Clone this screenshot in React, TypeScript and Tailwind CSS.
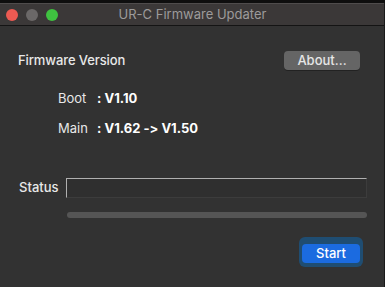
import React from "react";

const App = () => {
  return (
    <div className="w-[385px] h-[287px] bg-[#0e0e0e] overflow-hidden font-['Inter',sans-serif] [font-feature-settings:'calt'_0,'liga'_0]">
      <div className="h-[3px]" />
      <div className="h-[284px] bg-[#323232] flex flex-col border-r border-[#1a1a1a]">
        {/* title bar */}
        <div className="relative h-[23px] bg-[#3b3838] border-t border-[#4f4c4c] border-b border-b-[#141414] flex items-center">
          <div className="flex items-center gap-[8px] pl-[6px]">
            <span className="w-[12px] h-[12px] rounded-full bg-[#ed5a52]" />
            <span className="w-[12px] h-[12px] rounded-full bg-[#6b6868]" />
            <span className="w-[12px] h-[12px] rounded-full bg-[#3fc240]" />
          </div>
          <div className="absolute inset-0 flex items-center justify-center text-[13px] text-[#9d9b9b] pl-[1px]">
            UR-C Firmware Updater
          </div>
        </div>

        {/* body */}
        <div className="flex flex-col pt-[25px]">
          <div className="flex items-center justify-between pl-[18px] pr-[24px] h-[19px]">
            <span className="text-[13px] font-medium text-[#e8e8e8] tracking-[-0.1px]">Firmware Version</span>
            <button className="w-[76px] h-[19px] rounded-[4px] bg-[#656565] text-[13px] font-medium text-[#e6e6e6] leading-none shadow-[0_1px_0_rgba(0,0,0,0.3)]">
              About...
            </button>
          </div>

          <div className="flex flex-col gap-[14px] pl-[58px] mt-[20px] text-[13px] leading-[16px] text-[#e8e8e8]">
            <div className="flex">
              <span className="w-[39px]">Boot</span>
              <span className="font-bold text-white">: V1.10</span>
            </div>
            <div className="flex">
              <span className="w-[39px]">Main</span>
              <span className="font-bold text-white">: V1.62 -&gt; V1.50</span>
            </div>
          </div>

          <div className="flex items-center mt-[42px] pl-[19px]">
            <span className="w-[47px] text-[13px] font-medium text-[#e8e8e8]">Status</span>
            <div className="w-[301px] h-[20px] bg-[#2f2f2f] border border-[#3c3c3c] border-t-[#b0b0b0] border-l-[#b0b0b0]" />
          </div>

          <div className="ml-[67px] mt-[14px] w-[300px] h-[6px] rounded-full bg-[#555555]" />

          <div className="flex justify-end pr-[21px] mt-[19px]">
            <div className="p-[3px] rounded-[6px] bg-[#1f4d72]">
              <button className="w-[58px] h-[19px] rounded-[4px] bg-[#1b6be0] text-[13px] font-medium text-white leading-none">
                Start
              </button>
            </div>
          </div>
        </div>
      </div>
    </div>
  );
};

export default App;
